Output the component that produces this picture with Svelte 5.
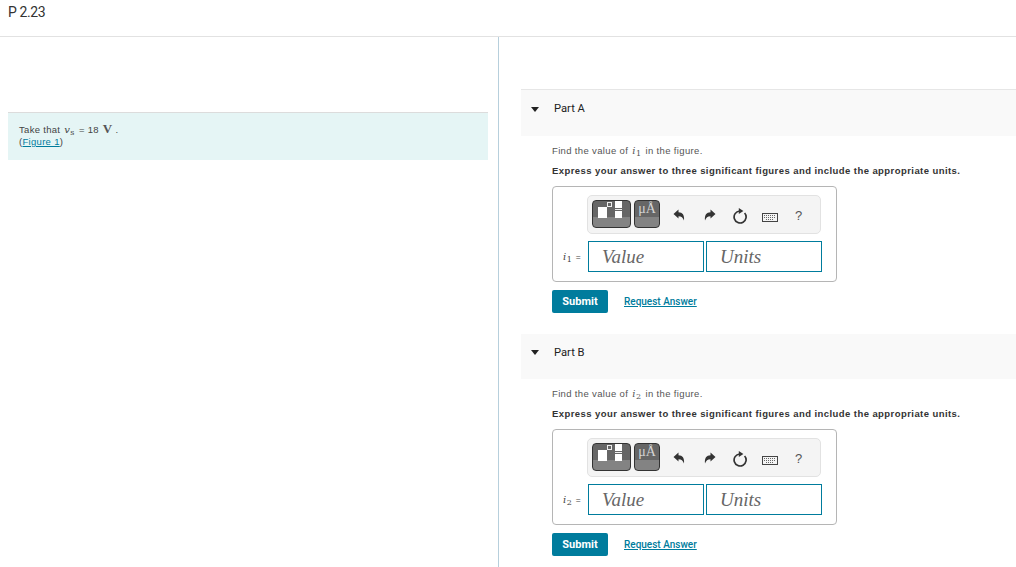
<script>
  const parts = [
    { name: 'Part A', sub: '1' },
    { name: 'Part B', sub: '2' }
  ];
</script>

{#snippet tool()}
  <div class="toolbar">
    <div class="tmpl wide">
      <span class="sq big"></span>
      <span class="sq tiny"></span>
      <span class="frac"><span class="sq f"></span><span class="sq f"></span></span>
    </div>
    <div class="tmpl unit"><span>μÅ</span></div>
    <svg class="ico undo" viewBox="0 0 12 12"><path d="M0.5 5 L5.5 0.5 V3.2 C9.5 3.2 11.6 6 11 11.5 C10 8.6 8.4 7.2 5.5 7.2 V9.6 Z" /></svg>
    <svg class="ico redo" viewBox="0 0 12 12"><path d="M11.5 5 L6.5 0.5 V3.2 C2.5 3.2 0.4 6 1 11.5 C2 8.6 3.6 7.2 6.5 7.2 V9.6 Z" /></svg>
    <svg class="ico reset" viewBox="0 0 16 16"><path class="ring" d="M12.6 5 A6 6 0 1 1 7.6 3" /><path d="M6.8 0 L11.4 3 L6.8 6 Z" /></svg>
    <svg class="ico keys" viewBox="0 0 16 9"><rect x="0.5" y="0.5" width="15" height="8" fill="#f4f4f4" stroke="#444" /><path class="grid" d="M2 2.5 H14 M2 4.5 H14 M4 6.5 H12" /></svg>
    <span class="help">?</span>
  </div>
{/snippet}

<div class="page">
  <header><h1>P 2.23</h1></header>
  <div class="columns">
    <aside>
      <div class="intro">
        <p>Take that <i class="var">v<sub>s</sub></i> = 18 <b class="volt">V</b> .</p>
        <p>(<a href="#fig">Figure 1</a>)</p>
      </div>
    </aside>
    <main>
      {#each parts as part}
        <section>
          <div class="part-head">
            <span class="caret"></span>
            <h2>{part.name}</h2>
          </div>
          <div class="part-body">
            <p class="q">Find the value of <i class="var">i<sub>{part.sub}</sub></i> in the figure.</p>
            <p class="ins">Express your answer to three significant figures and include the appropriate units.</p>
            <div class="answer">
              {@render tool()}
              <div class="inputs">
                <span class="label"><i class="var">i<sub>{part.sub}</sub></i> =</span>
                <span class="field">Value</span>
                <span class="field units">Units</span>
              </div>
            </div>
            <div class="actions">
              <button>Submit</button>
              <a href="#req">Request Answer</a>
            </div>
          </div>
        </section>
      {/each}
    </main>
  </div>
</div>

<style>
  :global(body) {
    margin: 0;
    background: #fff;
  }
  .page {
    width: 1016px;
    height: 567px;
    overflow: hidden;
    font-family: "Liberation Sans", Arial, sans-serif;
    color: #333;
  }
  header {
    height: 36px;
    border-bottom: 1px solid #e2e2e2;
  }
  h1 {
    margin: 0;
    padding: 5px 0 0 8px;
    font-size: 14px;
    line-height: 15px;
    font-weight: 400;
    font-family: Roboto, sans-serif;
    letter-spacing: -0.4px;
  }
  .columns {
    display: flex;
    height: 530px;
  }
  aside {
    width: 499px;
    box-sizing: border-box;
    padding: 75px 10px 0 8px;
    border-right: 1px solid #b7cfdc;
  }
  main {
    width: 517px;
    padding-top: 52px;
  }
  .intro {
    height: 48px;
    box-sizing: border-box;
    background: #e5f5f5;
    border-top: 1px solid #dcdcdc;
    padding: 10px 11px;
    font-size: 9.5px;
    line-height: 12px;
    letter-spacing: 0.3px;
    color: #444;
  }
  .intro p {
    margin: 0;
  }
  .intro a {
    color: #007c9d;
    text-decoration: underline;
  }
  .var {
    font-family: "DejaVu Serif", serif;
    font-style: italic;
    font-weight: 400;
    font-size: 10px;
    letter-spacing: 0.5px;
    margin: 0 1px;
  }
  sub {
    font-size: 8px;
    line-height: 0;
    font-style: normal;
    vertical-align: -1.5px;
  }
  .volt {
    font-family: "Liberation Serif", serif;
    font-size: 13px;
    font-weight: 700;
    color: #555;
    margin-left: 1px;
  }
  section {
    height: 245px;
    margin-left: 22px;
  }
  .part-head {
    height: 47px;
    box-sizing: border-box;
    border-top: 1px solid #e6e6e6;
    background: #f9f9f9;
    display: flex;
    align-items: flex-start;
    padding: 12px 0 0 10px;
  }
  section:last-child .part-head {
    height: 45px;
    border-top: none;
  }
  section:last-child .caret {
    margin-top: 4px;
  }
  .caret {
    width: 0;
    height: 0;
    margin-top: 5px;
    border-left: 4.5px solid transparent;
    border-right: 4.5px solid transparent;
    border-top: 5px solid #222;
  }
  h2 {
    margin: 0 0 0 15px;
    font-size: 11.2px;
    line-height: 14px;
    font-weight: 400;
    font-family: Roboto, sans-serif;
    color: #222;
  }
  .part-body {
    padding: 8px 0 0 31px;
  }
  .q {
    margin: 0;
    height: 13px;
    font-size: 9.5px;
    line-height: 13px;
    letter-spacing: 0.35px;
    color: #555;
  }
  .ins {
    margin: 7px 0 0;
    font-size: 9.5px;
    line-height: 13px;
    font-weight: 700;
    letter-spacing: 0.43px;
    color: #333;
  }
  .answer {
    width: 285px;
    height: 96px;
    box-sizing: border-box;
    margin-top: 9px;
    border: 1px solid #b5b5b5;
    border-radius: 4px;
    padding: 8px 0 0 34px;
  }
  .toolbar {
    width: 234px;
    height: 39px;
    box-sizing: border-box;
    border: 1px solid #e2e2e2;
    border-radius: 5px;
    background: #f4f4f4;
    display: flex;
    align-items: flex-start;
    padding: 4px 0 0 4px;
    position: relative;
  }
  .tmpl {
    height: 28px;
    box-sizing: border-box;
    border: 1px solid #333;
    border-radius: 4px;
    background: linear-gradient(#666 0 16px, #838383 16px);
    position: relative;
    flex: none;
  }
  .wide {
    width: 39px;
  }
  .unit {
    width: 26px;
    margin-left: 3px;
    color: #d4d4d4;
    font-family: "Liberation Serif", serif;
    font-size: 14px;
    text-align: center;
    line-height: 16px;
  }
  .sq {
    position: absolute;
    background: #fff;
  }
  .big {
    left: 5px;
    top: 6px;
    width: 9px;
    height: 11px;
  }
  .tiny {
    left: 14px;
    top: 1px;
    width: 3px;
    height: 3px;
    background: none;
    border: 1px solid #eee;
  }
  .frac {
    position: absolute;
    left: 22px;
    top: 0;
    width: 7px;
    height: 17px;
    background: linear-gradient(transparent 8px, #eee 8px 9px, transparent 9px);
  }
  .f {
    left: 0;
    width: 7px;
    height: 7px;
  }
  .f:first-child {
    top: 0;
  }
  .f:last-child {
    top: 10px;
  }
  .ico {
    position: absolute;
    fill: #333;
  }
  .undo {
    left: 85px;
    top: 13px;
    width: 12px;
    height: 12px;
  }
  .redo {
    left: 116px;
    top: 13px;
    width: 12px;
    height: 12px;
  }
  .reset {
    left: 144px;
    top: 12px;
    width: 16px;
    height: 16px;
  }
  .ring {
    fill: none;
    stroke: #333;
    stroke-width: 1.7;
  }
  .keys {
    left: 174px;
    top: 17px;
    width: 16px;
    height: 9px;
  }
  .grid {
    fill: none;
    stroke: #666;
    stroke-width: 1;
    stroke-dasharray: 1 1;
  }
  .help {
    position: absolute;
    left: 207px;
    top: 13px;
    font-size: 13px;
    line-height: 14px;
    color: #555;
  }
  .inputs {
    display: flex;
    align-items: center;
    margin: 7px 0 0 -25px;
  }
  .label {
    width: 26px;
    font-size: 8.5px;
    color: #444;
    white-space: nowrap;
  }
  .field {
    width: 116px;
    height: 31px;
    box-sizing: border-box;
    border: 1px solid #007c9d;
    padding-left: 13px;
    font-family: "Liberation Serif", serif;
    font-style: italic;
    font-size: 19px;
    line-height: 29px;
    color: #666;
  }
  .units {
    margin-left: 2px;
  }
  .actions {
    display: flex;
    align-items: center;
    margin-top: 8px;
    gap: 16px;
  }
  button {
    width: 56px;
    height: 23px;
    padding: 0;
    border: none;
    border-radius: 2px;
    background: #007c9d;
    color: #fff;
    font-family: Roboto, sans-serif;
    font-size: 11px;
    font-weight: 700;
  }
  .actions a {
    color: #007c9d;
    font-family: Roboto, sans-serif;
    font-size: 10px;
    font-weight: 500;
    text-decoration: underline;
  }
</style>
